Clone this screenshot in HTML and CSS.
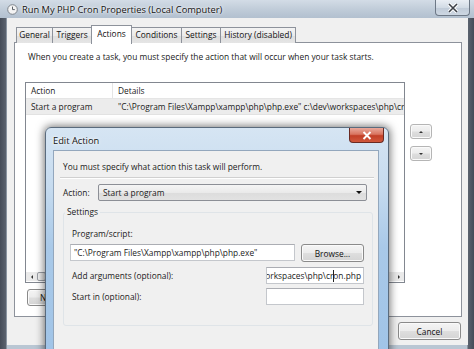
FILE: index.html
```html
<!DOCTYPE html>
<html>
<head>
<meta charset="utf-8">
<title>Run My PHP Cron Properties</title>
<link rel="stylesheet" href="styles.css">
</head>
<body>
<div class="desk">
  <div class="win">
    <div class="titlebar">
      <svg class="appicon" width="11" height="11" viewBox="0 0 11 11"><circle cx="5.5" cy="5.5" r="4.8" fill="#f4f4f4" stroke="#7d838b" stroke-width="1"/><path d="M5.5 2.6V5.6H7.8" fill="none" stroke="#5a6068" stroke-width="1"/></svg>
      <span class="title">Run My PHP Cron Properties (Local Computer)</span>
      <div class="closebtn"><svg width="12" height="10" viewBox="0 0 12 10"><path d="M2 1L10 9M10 1L2 9" stroke="#fff" stroke-width="3.4"/><path d="M2 1L10 9M10 1L2 9" stroke="#3c4048" stroke-width="1.6"/></svg></div>
    </div>
    <div class="client">
      <div class="tabs">
        <div class="tab">General</div>
        <div class="tab">Triggers</div>
        <div class="tab active">Actions</div>
        <div class="tab">Conditions</div>
        <div class="tab">Settings</div>
        <div class="tab">History (disabled)</div>
      </div>
      <div class="panel">
        <p class="intro">When you create a task, you must specify the action that will occur when your task starts.</p>
        <div class="listarea">
          <div class="listview">
            <div class="lv-head"><div class="col c1">Action</div><div class="col c2">Details</div></div>
            <div class="lv-row"><div class="col c1">Start a program</div><div class="col c2">"C:\Program Files\Xampp\xampp\php\php.exe" c:\dev\workspaces\php\cron.php</div></div>
            <div class="lv-fill"></div>
            <div class="hscroll">
              <div class="sb-btn"><span class="tri-l"></span></div>
              <div class="sb-thumb"></div>
              <div class="sb-track"></div>
              <div class="sb-btn"><span class="tri-r"></span></div>
            </div>
          </div>
          <div class="updown">
            <div class="btn small"><span class="tri-u"></span></div>
            <div class="btn small"><span class="tri-d"></span></div>
          </div>
        </div>
        <div class="panel-actions"><div class="btn new">New...</div></div>
      </div>
      <div class="footer"><div class="btn cancel">Cancel</div></div>
    </div>
  </div>

  <div class="dialog">
    <div class="dlg-titlebar">
      <span class="dlg-title">Edit Action</span>
      <div class="dlg-close"><svg width="12" height="9" viewBox="0 0 12 9"><path d="M2.5 1L9.5 8M9.5 1L2.5 8" stroke="#fff" stroke-width="1.9"/></svg></div>
    </div>
    <div class="dlg-client">
      <p class="dlg-intro">You must specify what action this task will perform.</p>
      <div class="sep"></div>
      <div class="action-row">
        <span class="lbl">Action:</span>
        <div class="select"><span>Start a program</span><span class="tri-d dark"></span></div>
      </div>
      <fieldset class="settings">
        <legend>Settings</legend>
        <div class="set-body">
          <div class="lbl field-lbl">Program/script:</div>
          <div class="prog-row">
            <div class="input prog">"C:\Program Files\Xampp\xampp\php\php.exe"</div>
            <div class="btn browse">Browse...</div>
          </div>
          <div class="opt-row">
            <span class="lbl field-lbl">Add arguments (optional):</span>
            <div class="input short args"><span class="args-text">c:\dev\workspaces\php\cron.php</span><span class="ibeam"></span></div>
          </div>
          <div class="opt-row">
            <span class="lbl field-lbl">Start in (optional):</span>
            <div class="input short"></div>
          </div>
        </div>
      </fieldset>
    </div>
  </div>
</div>
</body>
</html>
```

FILE: styles.css
```css
* { box-sizing: border-box; }
html, body { margin: 0; padding: 0; }
body {
  width: 474px;
  height: 349px;
  overflow: hidden;
  background: #3e4552;
  font-family: "Open Sans", "Noto Sans", sans-serif;
  font-size: 8.35px;
  color: #1a1a1a;
}
.desk { position: relative; width: 474px; height: 349px; overflow: hidden; }

/* ---------- outer window ---------- */
.win {
  position: absolute;
  left: 0; top: 0;
  width: 474px;
  height: 349px;
  display: flex;
  flex-direction: column;
  background: linear-gradient(90deg, #454c58 0, #5b636f 6px, #b9c6d3 7px, #b9c6d3 467px, #5b636f 468px, #454c58 474px);
}
.titlebar {
  height: 18px;
  display: flex;
  align-items: center;
  position: relative;
  background: linear-gradient(180deg, #d3dce6 0%, #bfcbd8 55%, #b2c0cf 100%);
}
.appicon { margin-left: 7px; margin-right: 4px; }
.title {
  font-size: 9.3px;
  color: #111;
  text-shadow: 0 0 4px #fff, 0 0 2px #fff;
}
.closebtn {
  position: absolute;
  right: 4px; top: 0;
  width: 35px; height: 16px;
  border: 1px solid #6d7886;
  border-top: none;
  border-radius: 0 0 4px 4px;
  background: linear-gradient(180deg, #e9eef4 0%, #d2dbe5 50%, #bfcad7 51%, #cdd7e2 100%);
  display: flex; align-items: center; justify-content: center;
}
.client {
  flex: 1;
  margin: 0 6px 4px 7px;
  background: #f0f0f0;
  padding: 7px 6px 0 7px;
  display: flex;
  flex-direction: column;
}

/* tabs */
.tabs {
  display: flex;
  align-items: flex-end;
  height: 18px;
  padding-left: 2px;
  position: relative;
  z-index: 2;
}
.tab {
  height: 16px;
  line-height: 14px;
  padding: 0 1px;
  text-align: center;
  border: 1px solid #8d929b;
  border-bottom: none;
  margin-right: -1px;
  background: linear-gradient(180deg, #f3f3f3 0%, #ebebeb 50%, #dedede 51%, #e5e5e5 100%);
  color: #111;
  white-space: nowrap;
}
.tab:nth-child(1) { width: 37px; }
.tab:nth-child(2) { width: 40px; }
.tab:nth-child(4) { width: 51px; }
.tab:nth-child(5) { width: 40px; }
.tab:nth-child(6) { width: 76px; }
.tab.active {
  width: 41px;
  height: 19px;
  margin-bottom: -1px;
  background: #fff;
  line-height: 16px;
  padding-bottom: 2px;
}
.panel {
  height: 275px;
  margin-top: -1px;
  background: #fff;
  border: 1px solid #8d929b;
  padding: 8px 0 0 10px;
  display: flex;
  flex-direction: column;
}
.intro { margin: 0 0 19px 3px; line-height: 12px; }
.listarea { display: flex; align-items: flex-start; }
.listview {
  width: 380px;
  height: 201px;
  border: 1px solid #828790;
  display: flex;
  flex-direction: column;
  overflow: hidden;
}
.lv-head {
  height: 16px;
  display: flex;
  border-bottom: 1px solid #e5e5e5;
  line-height: 15px;
  background: #fff;
}
.lv-head .c1 { border-right: 1px solid #e5e5e5; }
.col { white-space: nowrap; overflow: hidden; }
.c1 { width: 87px; padding-left: 5px; flex: none; }
.c2 { padding-left: 5px; flex: 1; }
.lv-row {
  height: 16px;
  line-height: 15px;
  display: flex;
  background: #ececec;
  border-bottom: 1px solid #e2e2e2;
}
.lv-fill { flex: 1; }
.hscroll {
  height: 9px;
  display: flex;
  background: #eaeaea;
  margin-bottom: 1px;
}
.sb-btn {
  width: 11px;
  display: flex; align-items: center; justify-content: center;
}
.sb-thumb {
  width: 9px;
  border: 1px solid #9a9ea5;
  border-radius: 2px;
  background: linear-gradient(90deg, #f4f4f4, #dcdcdc);
}
.sb-track { flex: 1; }
.tri-l, .tri-r, .tri-u, .tri-d { display: inline-block; width: 0; height: 0; }
.tri-l { border-top: 2px solid transparent; border-bottom: 2px solid transparent; border-right: 2px solid #333; }
.tri-r { border-top: 2px solid transparent; border-bottom: 2px solid transparent; border-left: 2px solid #333; }
.tri-u { border-left: 2px solid transparent; border-right: 2px solid transparent; border-bottom: 2px solid #333; }
.tri-d { border-left: 2px solid transparent; border-right: 2px solid transparent; border-top: 2px solid #333; }
.tri-d.dark { border-left-width: 3px; border-right-width: 3px; border-top-width: 3px; border-top-color: #111; }

.updown {
  margin-left: 5px;
  padding-top: 42px;
  display: flex;
  flex-direction: column;
  gap: 7px;
}
.btn {
  border: 1px solid #8a8a8a;
  border-radius: 3px;
  background: linear-gradient(180deg, #f4f4f4 0%, #ececec 48%, #dedede 52%, #d4d4d4 100%);
  box-shadow: inset 0 0 0 1px #fafafa;
  display: flex; align-items: center; justify-content: center;
  color: #111;
}
.btn.small { width: 22px; height: 15px; border-color: #b5b5b5; }
.panel-actions { margin-top: 6px; padding-left: 2px; }
.btn.new { width: 50px; height: 17px; }
.footer { display: flex; justify-content: flex-end; padding-top: 5px; padding-right: 1px; }
.btn.cancel { width: 63px; height: 18px; }

/* ---------- dialog ---------- */
.dialog {
  position: absolute;
  left: 45px; top: 127px;
  width: 344px;
  height: 240px;
  border: 1px solid #5a6b7d;
  border-radius: 6px 6px 0 0;
  background: linear-gradient(180deg, #d6e5f3 0%, #c6dbef 25%, #a9c9e8 50%, #9fc3e7 100%);
  box-shadow: 0 0 9px 1px rgba(0,0,0,0.55);
  padding: 0 9px 0 7px;
  display: flex;
  flex-direction: column;
}
.dlg-titlebar { height: 22px; position: relative; display: flex; align-items: center; }
.dlg-title { font-size: 9.3px; color: #111; text-shadow: 0 0 4px #fff, 0 0 2px #fff; padding-top: 3px; }
.dlg-close {
  position: absolute;
  right: -5px; top: 0;
  width: 35px; height: 15px;
  border: 1px solid #6a2a22;
  border-top: none;
  border-radius: 0 0 4px 4px;
  background: linear-gradient(180deg, #e9a99c 0%, #d9745f 45%, #c23f27 55%, #d0583c 100%);
  display: flex; align-items: center; justify-content: center;
}
.dlg-client {
  flex: 1;
  background: #f0f0f0;
  border: 1px solid #93a7bd;
  border-bottom: none;
  padding: 10px 4px 0 9px;
}
.dlg-intro { margin: 0; line-height: 12px; }
.sep {
  height: 1px;
  background: #d0d0d0;
  border-bottom: 1px solid #fff;
  box-sizing: content-box;
  margin: 4px 0 5px -3px;
}
.action-row { display: flex; align-items: center; height: 17px; }
.action-row .lbl { width: 35px; }
.select {
  width: 269px;
  height: 17px;
  border: 1px solid #8c8f96;
  border-radius: 2px;
  background: linear-gradient(180deg, #f5f5f5 0%, #eaeaea 50%, #dcdcdc 51%, #e2e2e2 100%);
  display: flex; align-items: center; justify-content: space-between;
  padding: 0 4px 0 4px;
}
.settings {
  margin: 5px 0 0 0;
  padding: 0 0 20px 1px;
  border: 1px solid #dfe4e8;
  border-radius: 3px;
  width: 310px;
}
.settings legend { padding: 0 2px; line-height: 12px; }
.set-body { padding: 10px 8px 0 5px; }
.field-lbl { padding-left: 2px; line-height: 12px; display: block; }
.prog-row { display: flex; gap: 6px; margin-top: 4px; }
.input {
  height: 17px;
  background: #fff;
  border: 1px solid #c4c7cc;
  border-top-color: #abadb3;
  line-height: 15px;
  padding-left: 3px;
  white-space: nowrap;
  overflow: hidden;
}
.input.prog { width: 225px; }
.btn.browse { width: 63px; height: 18px; }
.opt-row { display: flex; align-items: center; justify-content: space-between; margin-top: 5px; }
.opt-row + .opt-row { margin-top: 4px; }
.input.short { width: 98px; height: 17px; }
.args { position: relative; padding-left: 0; display: flex; justify-content: flex-end; padding-right: 2px; }
.args-text { flex: none; }
.ibeam {
  position: absolute;
  right: 29px; top: 2px;
  width: 1px; height: 12px;
  background: #222;
}
```
